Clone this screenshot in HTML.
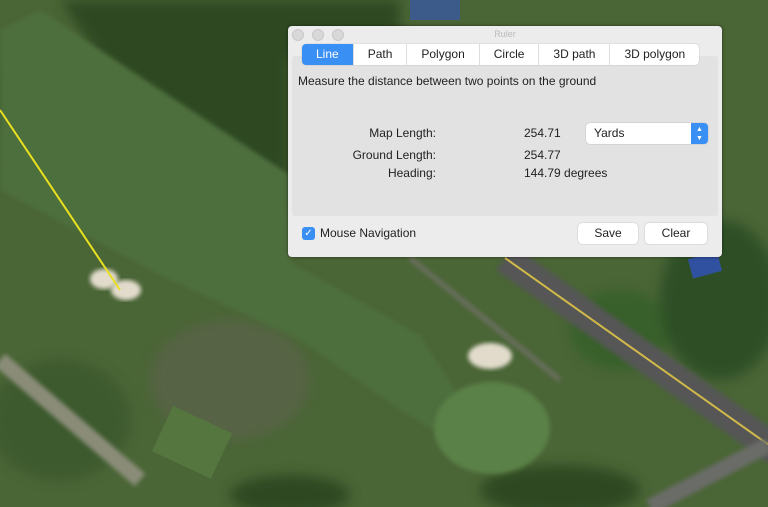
<!DOCTYPE html>
<html><head><meta charset="utf-8"><style>
body{margin:0;width:768px;height:507px;overflow:hidden;font-family:"Liberation Sans",sans-serif;}
#map{position:absolute;left:0;top:0}
.dlg{position:absolute;left:288px;top:26px;width:434px;height:231px;background:#ececec;border-radius:4px;box-shadow:0 0 3px rgba(0,0,0,.5);font-size:12px;color:#222;}
.title{position:absolute;top:0;left:0;right:0;height:16px;text-align:center;font-size:9px;color:#bbb;line-height:16px}
.dot{position:absolute;top:3px;width:10px;height:10px;border-radius:50%;background:#d8d8d8;border:1px solid #c8c8c8}
.panel{position:absolute;left:4px;top:30px;width:426px;height:160px;background:#e2e2e2;border-radius:3px}
.tabs{position:absolute;left:14px;top:18px;height:21px;display:flex;background:#fff;border-radius:4px;box-shadow:0 0 1px #999;}
.tabs div{padding:0 14px;line-height:21px;border-left:1px solid #ddd;font-size:12px}
.tabs div.on{background:#3a8ff5;color:#fff;border-radius:4px 0 0 4px;border:none;padding:0 14px}
.t{position:absolute;white-space:nowrap}
.btn{position:absolute;top:197px;height:21px;background:#fff;border-radius:4px;box-shadow:0 0 1px #888;text-align:center;line-height:21px}
</style></head><body>
<svg id="map" width="768" height="507" viewBox="0 0 768 507">
<defs><filter id="b"><feGaussianBlur stdDeviation="6"/></filter><filter id="s"><feGaussianBlur stdDeviation="2"/></filter></defs>
<rect width="768" height="507" fill="#4a6536"/>
<g filter="url(#b)">
<polygon points="60,0 400,0 400,40 290,60 290,220 200,160 100,60" fill="#2e4a22"/>
<ellipse cx="620" cy="330" rx="50" ry="40" fill="#37602a"/>
<ellipse cx="720" cy="300" rx="60" ry="80" fill="#2f5026"/>
<ellipse cx="60" cy="420" rx="70" ry="60" fill="#3c5a2e"/>
<ellipse cx="230" cy="380" rx="80" ry="60" fill="#566444"/>
<ellipse cx="560" cy="490" rx="80" ry="25" fill="#2e4a22"/>
<ellipse cx="290" cy="495" rx="60" ry="20" fill="#2e4a22"/>
<ellipse cx="20" cy="100" rx="20" ry="60" fill="#38562a"/>
</g>
<polygon filter="url(#s)" fill="#4e6e3e" points="0,30 40,10 130,70 290,175 290,262 420,335 455,390 450,440 400,410 300,340 160,275 0,190"/>
<ellipse cx="492" cy="428" rx="58" ry="46" fill="#5a8146" filter="url(#s)"/>
<rect x="160" y="415" width="65" height="50" fill="#55763f" transform="rotate(25 187 440)"/>
<line x1="0" y1="360" x2="140" y2="480" stroke="#8a8c78" stroke-width="16" filter="url(#s)"/>
<line x1="505" y1="258" x2="790" y2="460" stroke="#555754" stroke-width="30" filter="url(#s)"/>
<line x1="505" y1="258" x2="790" y2="460" stroke="#d0b84a" stroke-width="2"/>
<line x1="650" y1="507" x2="768" y2="445" stroke="#6a6c68" stroke-width="16" filter="url(#s)"/>
<line x1="410" y1="258" x2="560" y2="380" stroke="#6a6e5e" stroke-width="5" filter="url(#s)"/>
<ellipse cx="490" cy="356" rx="22" ry="13" fill="#e2dbcc" filter="url(#s)"/>
<ellipse cx="104" cy="279" rx="14" ry="10" fill="#e2dbcc" filter="url(#s)"/>
<ellipse cx="126" cy="290" rx="15" ry="10" fill="#e2dbcc" filter="url(#s)"/>
<rect x="410" y="0" width="50" height="20" fill="#3c5a8a"/>
<rect x="690" y="255" width="30" height="20" fill="#3050a0" transform="rotate(-15 705 265)"/>
<line x1="0" y1="110" x2="120" y2="290" stroke="#e8e020" stroke-width="2"/>
</svg>
<div class="dlg">
<div class="title">Ruler</div>
<div class="dot" style="left:4px"></div><div class="dot" style="left:24px"></div><div class="dot" style="left:44px"></div>
<div class="panel"></div>
<div class="tabs"><div class="on">Line</div><div>Path</div><div>Polygon</div><div>Circle</div><div>3D path</div><div>3D polygon</div></div>
<div class="t" style="left:10px;top:48px">Measure the distance between two points on the ground</div>
<div class="t" style="right:286px;top:100px">Map Length:</div>
<div class="t" style="right:286px;top:122px">Ground Length:</div>
<div class="t" style="right:286px;top:140px">Heading:</div>
<div class="t" style="left:236px;top:100px">254.71</div>
<div class="t" style="left:236px;top:122px">254.77</div>
<div class="t" style="left:236px;top:140px">144.79 degrees</div>
<div style="position:absolute;left:298px;top:97px;width:122px;height:21px;background:#fff;border-radius:4px;box-shadow:0 0 1px #888"><span class="t" style="left:8px;top:3px">Yards</span><div style="position:absolute;right:0;top:0;width:17px;height:21px;background:#3a8ff5;border-radius:0 4px 4px 0;color:#fff;font-size:7px;text-align:center;line-height:9px;padding-top:2px;box-sizing:border-box">▲<br>▼</div></div>
<div style="position:absolute;left:14px;top:201px;width:13px;height:13px;background:#3a8ff5;border-radius:3px;color:#fff;font-size:10px;text-align:center;line-height:13px">✓</div>
<div class="t" style="left:32px;top:200px">Mouse Navigation</div>
<div class="btn" style="left:290px;width:60px">Save</div>
<div class="btn" style="left:357px;width:62px">Clear</div>
</div>
</body></html>
